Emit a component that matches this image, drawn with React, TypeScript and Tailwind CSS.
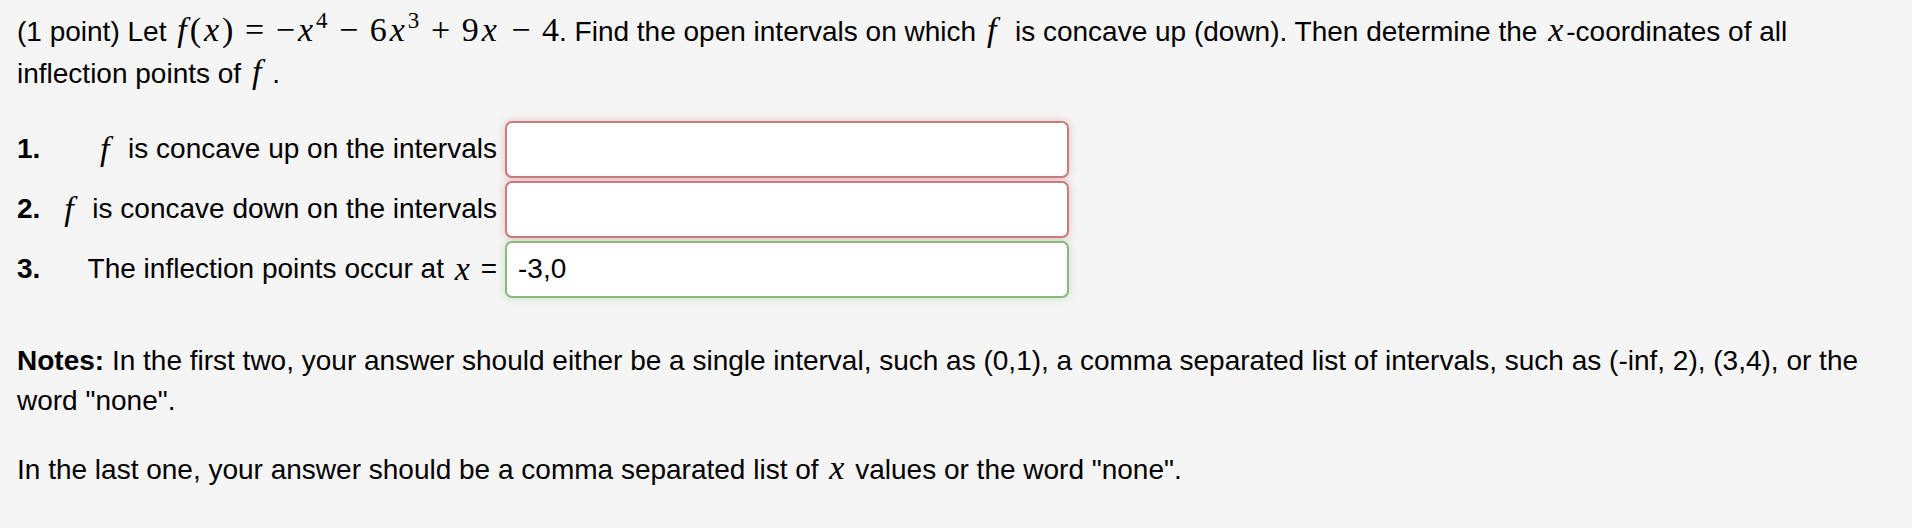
import React from 'react'

function V({ children }: { children: React.ReactNode }) {
  return <span className="font-['Liberation_Serif',serif] italic text-[34px] px-[3px]">{children}</span>
}

function R({ children }: { children: React.ReactNode }) {
  return <span className="font-['Liberation_Serif',serif] text-[34px]">{children}</span>
}

function Sup({ children }: { children: React.ReactNode }) {
  return <span className="font-['Liberation_Serif',serif] align-[0.55em] text-[23px] leading-none">{children}</span>
}

function Op({ children }: { children: React.ReactNode }) {
  return <span className="font-['Liberation_Serif',serif] text-[34px] mx-[0.34em]">{children}</span>
}

interface AnswerRow {
  num: string
  label: React.ReactNode
  value: string
  status: 'incorrect' | 'correct'
}

const rows: AnswerRow[] = [
  { num: '1.', label: <><V>f</V>&nbsp; is concave up on the intervals</>, value: '', status: 'incorrect' },
  { num: '2.', label: <><V>f</V>&nbsp; is concave down on the intervals</>, value: '', status: 'incorrect' },
  { num: '3.', label: <>The inflection points occur at&nbsp;<V>x</V>&nbsp;=</>, value: '-3,0', status: 'correct' },
]

export default function App() {
  return (
    <div className="min-h-screen bg-[#f5f5f5] px-[17px] pt-[9px] text-[28px] leading-[40px] text-black font-['Liberation_Sans',Arial,sans-serif]">
      <div>
        <div className="whitespace-nowrap">
          (1 point) Let <V>f</V><R>(</R><V>x</V><R>)</R><Op>=</Op><R>−</R><V>x</V><Sup>4</Sup><Op>−</Op><R>6</R><V>x</V><Sup>3</Sup><Op>+</Op><R>9</R><V>x</V><Op>−</Op><R>4</R>. Find the open intervals on which <V>f</V>&nbsp; is concave up (down). Then determine the <V>x</V>-coordinates of all
        </div>
        <div className="whitespace-nowrap">
          inflection points of <V>f</V>&nbsp;.
        </div>
      </div>

      <div className="mt-[27px] grid grid-cols-[38px_434px_564px] gap-x-[8px] gap-y-[3px]">
        {rows.map(row => (
          <React.Fragment key={row.num}>
            <div className="flex h-[57px] items-center font-bold">{row.num}</div>
            <div className="flex h-[57px] items-center justify-end whitespace-nowrap">{row.label}</div>
            <div
              className={
                row.status === 'correct'
                  ? 'flex h-[57px] items-center rounded-[7px] border-2 border-[#88b97f] bg-white px-[11px] shadow-[0_0_8px_rgba(120,180,110,0.35)]'
                  : 'flex h-[57px] items-center rounded-[7px] border-2 border-[#c97c7c] bg-white px-[11px] shadow-[0_0_9px_rgba(200,110,110,0.4)]'
              }
            >
              {row.value}
            </div>
          </React.Fragment>
        ))}
      </div>

      <div className="mt-[43px]">
        <div className="whitespace-nowrap">
          <span className="font-bold">Notes:</span> In the first two, your answer should either be a single interval, such as (0,1), a comma separated list of intervals, such as (-inf, 2), (3,4), or the
        </div>
        <div className="whitespace-nowrap">word "none".</div>
      </div>

      <div className="mt-[27px] whitespace-nowrap">
        In the last one, your answer should be a comma separated list of <V>x</V> values or the word "none".
      </div>
    </div>
  )
}
